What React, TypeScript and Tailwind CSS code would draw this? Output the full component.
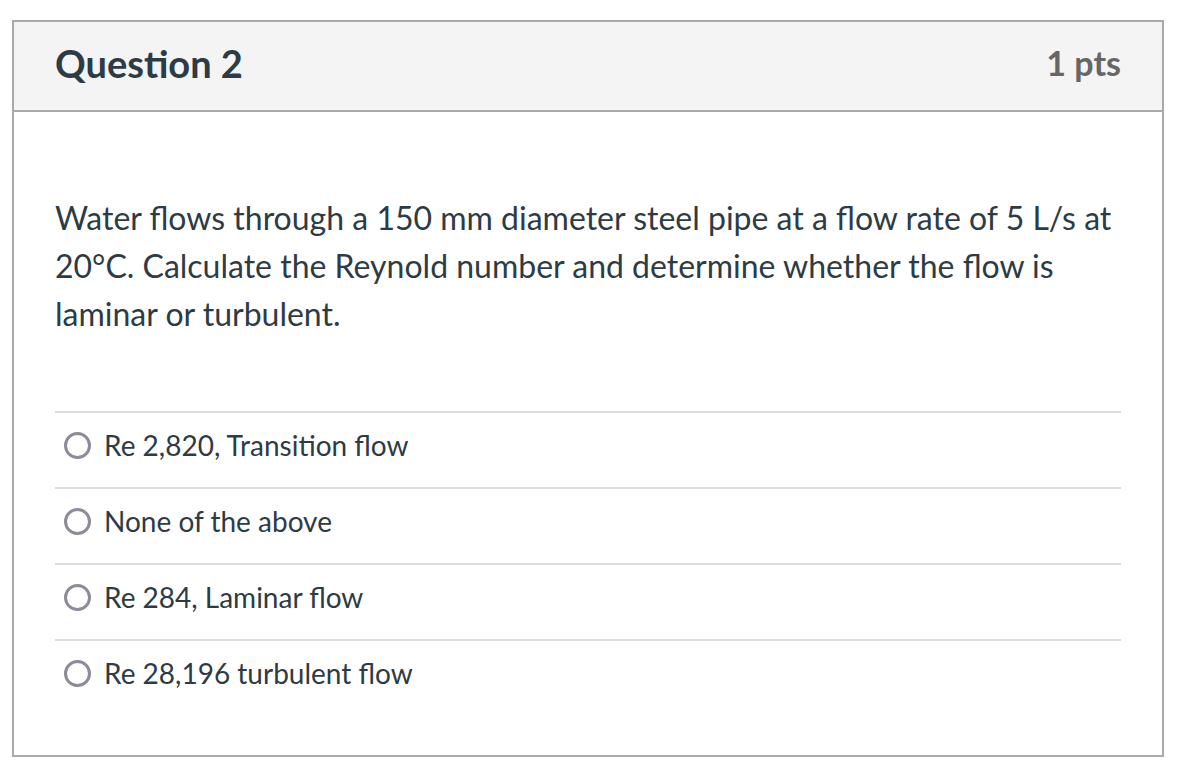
import React from "react";

const answers = [
  "Re 2,820, Transition flow",
  "None of the above",
  "Re 284, Laminar flow",
  "Re 28,196 turbulent flow",
];

function Radio() {
  return (
    <span className="inline-block w-[27px] h-[27px] rounded-full border-[3px] border-[#8b8b99] bg-white shrink-0" />
  );
}

export default function App() {
  return (
    <div className="min-h-screen bg-white pt-[20px] pl-[12px] font-['Lato','Liberation_Sans',sans-serif] text-[#2d3b45]">
      <div className="w-[1152px] h-[737px] border-2 border-[#aaaaaa] flex flex-col">
        {/* header */}
        <div className="h-[90px] shrink-0 bg-[#f4f4f4] border-b-2 border-[#aaaaaa] flex items-center justify-between px-[41px] pb-[6px]">
          <h2 className="text-[38px] font-bold leading-none text-[#2d3b45]">Question 2</h2>
          <span className="text-[34px] font-bold leading-none text-[#666666]">1 pts</span>
        </div>

        {/* body */}
        <div className="px-[41px] pt-[82px]">
          <p className="text-[32px] leading-[48px]">
            Water flows through a 150 mm diameter steel pipe at a flow rate of 5 L/s at 20°C. Calculate the
            Reynold number and determine whether the flow is laminar or turbulent.
          </p>

          <div className="mt-[73px]">
            {answers.map((a) => (
              <div key={a} className="h-[76px] border-t-2 border-[#dddddd] flex items-center gap-[13px] pl-[9px] pb-[10px]">
                <Radio />
                <span className="text-[28px] leading-none">{a}</span>
              </div>
            ))}
          </div>
        </div>
      </div>
    </div>
  );
}
